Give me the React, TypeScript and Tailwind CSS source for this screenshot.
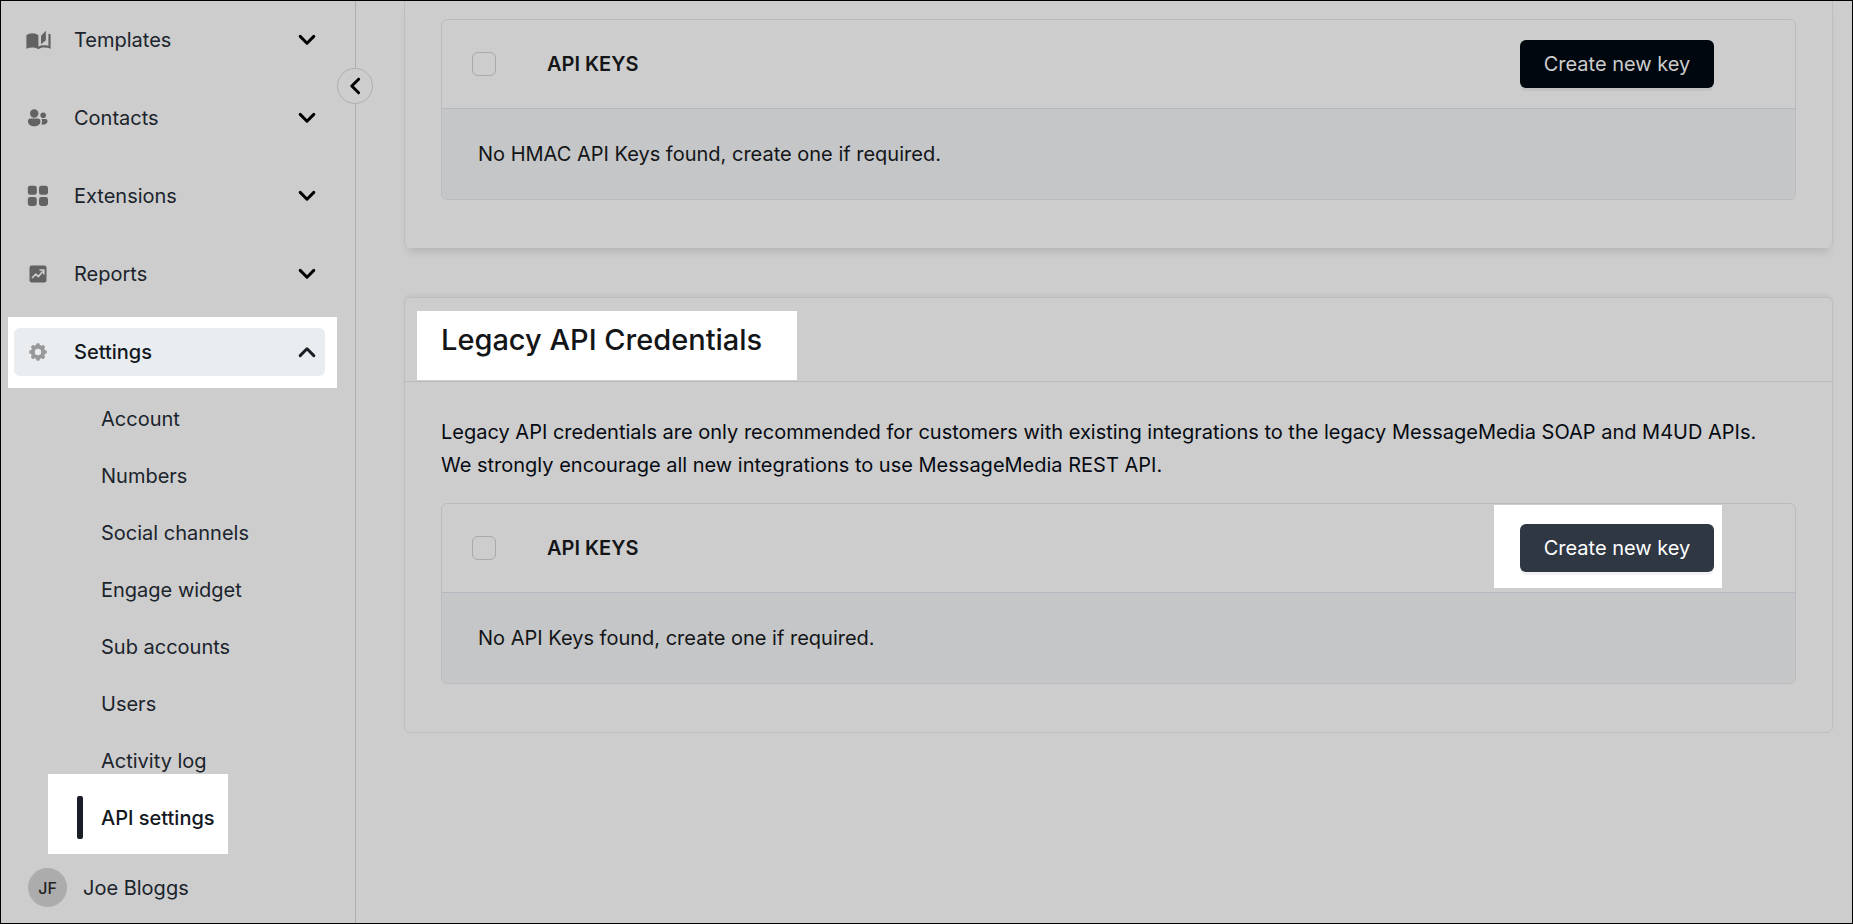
import React from "react";

function Chevron({ className = "" }: { className?: string }) {
  return (
    <svg viewBox="0 0 18 12" className={`h-3 w-[18px] fill-none ${className}`} stroke="currentColor" strokeWidth="3" strokeLinecap="round" strokeLinejoin="round" aria-hidden="true">
      <path d="M2.2 2.4 9 9.2l6.800-6.800" />
    </svg>
  );
}

function TemplatesIcon() {
  return (
    <svg viewBox="0 0 25 20" className="h-5 w-[25px]" fill="currentColor" aria-hidden="true">
      <path d="M.4 5.200C1.800 3.900 4 3.200 6.400 3.200s4.600.7 6 2v11.500c1.500-1 3.500-1.400 5.600-1.400 1.500 0 3 .1 4.400.6V4.100l1.200-.3 1 .7v14.200c-2-.8-4.200-1.200-6.600-1.200-2.200 0-4.200.5-5.600 1.700-1.500-1.100-3.700-1.700-6-1.700-2.200 0-4.200.4-6 1.200Z" />
      <path d="m15 5.700 4.900-5v9.500L15 14.300Z" />
    </svg>
  );
}

function ContactsIcon() {
  return (
    <svg viewBox="0 0 22 20" className="h-5 w-[22px]" fill="currentColor" aria-hidden="true">
      <circle cx="7.200" cy="5.500" r="4.200" />
      <path d="M3.600 10.600h7.200a2.600 2.600 0 0 1 2.600 2.600c0 3.200-2.700 5-6.200 5S1 16.400 1 13.200a2.600 2.600 0 0 1 2.600-2.600Z" />
      <circle cx="16.200" cy="7.200" r="2.800" />
      <path d="M14.400 10.900h4a2.200 2.200 0 0 1 2.200 2.200c0 2.200-1.900 3.600-4.300 3.600-.8 0-1.400-.1-2-.4.500-.9.800-1.900.8-3 0-.9-.2-1.800-.7-2.400Z" />
    </svg>
  );
}

function ExtensionsIcon() {
  return (
    <svg viewBox="0 0 22 22" className="size-[22px]" fill="currentColor" aria-hidden="true">
      <rect x="0.800" y="0.800" width="9" height="9" rx="2.400" />
      <rect x="12" y="0.800" width="9" height="9" rx="2.400" />
      <rect x="0.800" y="12" width="9" height="9" rx="2.400" />
      <rect x="12" y="12" width="9" height="9" rx="2.400" />
    </svg>
  );
}

function ReportsIcon() {
  return (
    <svg viewBox="0 0 18 18" className="size-[18px]" aria-hidden="true">
      <rect x="0.500" y="0.500" width="17" height="17" rx="2.200" fill="currentColor" />
      <path d="m3 13 3.800-3.900 2.600 2.500 4.400-5.300M10.400 5h4.400v4.400" fill="none" stroke="#cdcdcd" strokeWidth="1.600" />
    </svg>
  );
}

function GearIcon() {
  return (
    <svg viewBox="0 0 18 18" className="size-[18px] text-[#999999]" aria-hidden="true">
      <circle cx="9" cy="9" r="5.200" fill="none" stroke="currentColor" strokeWidth="4" />
      <g fill="currentColor">
        {[0, 45, 90, 135, 180, 225, 270, 315].map((a) => (
          <rect key={a} x="7.200" y="0.200" width="3.600" height="4" rx="1.200" transform={`rotate(${a} 9 9)`} />
        ))}
      </g>
    </svg>
  );
}

function NavRow({ icon, label, open = false }: { icon: React.ReactNode; label: string; open?: boolean }) {
  return (
    <button
      type="button"
      aria-expanded={open}
      className={`flex h-12 w-full items-center rounded-md pr-[9px] text-left ${open ? "bg-[#e9edf0] font-medium text-[#14181f]" : "text-[#1b242c]"}`}
    >
      <span className="flex w-12 shrink-0 justify-center text-[#626262]">{icon}</span>
      <span className="ml-3 flex-1">{label}</span>
      <Chevron className={open ? "rotate-180 text-[#1a1e26]" : "text-black"} />
    </button>
  );
}

const sections = [
  { label: "Templates", icon: <TemplatesIcon /> },
  { label: "Contacts", icon: <ContactsIcon /> },
  { label: "Extensions", icon: <ExtensionsIcon /> },
  { label: "Reports", icon: <ReportsIcon /> },
];

const settingsLinks = ["Account", "Numbers", "Social channels", "Engage widget", "Sub accounts", "Users", "Activity log"];

function Sidebar() {
  return (
    <aside className="relative flex w-[355px] shrink-0 flex-col border-r border-[#acafb1] pt-[15px] pb-4">
      <button
        type="button"
        aria-label="Collapse menu"
        className="absolute top-[67px] -right-[18px] flex size-9 items-center justify-center rounded-full border border-[#a9b0b4] bg-[#cdcdcd] text-black"
      >
        <Chevron className="rotate-90" />
      </button>
      <nav className="flex flex-col gap-[30px] pr-[30px] pl-[13px]">
        {sections.map((s) => (
          <NavRow key={s.label} icon={s.icon} label={s.label} />
        ))}
        <div className="-mt-[11px] -mr-3 -mb-3 -ml-1.5 bg-white pt-[11px] pr-3 pb-3 pl-1.5">
          <NavRow icon={<GearIcon />} label="Settings" open />
        </div>
        <ul className="-mt-4 flex flex-col items-start">
          {settingsLinks.map((l) => (
            <li key={l}>
              <a href="#" className="flex h-[57px] items-center pl-[87px] text-[#1b242c]">
                {l}
              </a>
            </li>
          ))}
          <li className="-mt-[15px] -mb-2 ml-[34px] bg-white pt-[15px] pr-[13px] pb-2">
            <a href="#" aria-current="page" className="flex h-[57px] items-center pl-[29px] font-medium text-[#14181f]">
              <span className="mr-[18px] h-[43px] w-1.5 rounded-xs bg-[#1a1e26]" />
              API settings
            </a>
          </li>
        </ul>
      </nav>
      <div className="mt-auto flex items-center gap-4 pl-[27px] text-[#1b242c]">
        <span className="flex size-[39px] items-center justify-center rounded-full bg-[#acacac] text-base font-medium text-[#222222]">JF</span>
        Joe Bloggs
      </div>
    </aside>
  );
}

function KeysTable({ id, empty, highlighted = false }: { id: string; empty: string; highlighted?: boolean }) {
  return (
    <div className="overflow-hidden rounded-md border border-[#b9bbbf]">
      <table className="w-full border-separate border-spacing-0 text-left text-[#131517]">
        <thead>
          <tr className="h-[89px]">
            <th className="w-[105px] border-b border-[#b5b7c1] pl-[30px]">
              <input id={id} type="checkbox" aria-label="Select all API keys" className="block size-6 appearance-none rounded-md border border-[#a8a8a8]" />
            </th>
            <th className="border-b border-[#b5b7c1] font-semibold">
              <label htmlFor={id}>API KEYS</label>
            </th>
            <th className="border-b border-[#b5b7c1] p-0 align-top">
              <div className="flex justify-end pt-px pr-[73px]">
                <div className={`pt-[19px] pr-2 pb-4 pl-[26px] ${highlighted ? "bg-white" : ""}`}>
                  <button
                    type="button"
                    className={`block h-12 w-[194px] rounded-md font-normal ${highlighted ? "bg-[#2f3743] text-white shadow-[0_3px_0_#f2f2f2]" : "bg-[#00070f] text-[#cdcdcd] shadow-[0_3px_0_#c2c2c2]"}`}
                  >
                    Create new key
                  </button>
                </div>
              </div>
            </th>
          </tr>
        </thead>
        <tbody>
          <tr className="h-[90px] bg-[#c4c6c8]">
            <td colSpan={3} className="pl-9">
              {empty}
            </td>
          </tr>
        </tbody>
      </table>
    </div>
  );
}

export default function App() {
  return (
    <div className="flex min-h-screen border border-black bg-[#cdcdcd] font-['Inter',sans-serif] text-xl">
      <Sidebar />
      <main className="min-w-0 flex-1 pr-[19px] pl-12">
        <section className="rounded-b-md border-x border-[#bebebe] px-9 pt-[18px] pb-12 shadow-[0_8px_8px_-4px_rgba(0,0,0,0.12)]">
          <KeysTable id="hmac-keys" empty="No HMAC API Keys found, create one if required." />
        </section>
        <section className="mt-[49px] rounded-md border border-[#bebebe] shadow-[0_-3px_5px_-2px_rgba(0,0,0,0.08)]">
          <header className="flex border-b border-[#bbbbbb] pt-[13px] pb-px pl-3">
            <h2 className="bg-white pt-[9px] pr-[35px] pb-5 pl-6 text-[29px] leading-10 font-medium text-[#131517]">Legacy API Credentials</h2>
          </header>
          <div className="px-9 pt-[34px] pb-12">
            <p className="mb-[21px] leading-[33px] text-[#060a12]">
              Legacy API credentials are only recommended for customers with existing integrations to the legacy MessageMedia SOAP and M4UD APIs.
              <br />
              We strongly encourage all new integrations to use MessageMedia REST API.
            </p>
            <KeysTable id="legacy-keys" empty="No API Keys found, create one if required." highlighted />
          </div>
        </section>
      </main>
    </div>
  );
}
